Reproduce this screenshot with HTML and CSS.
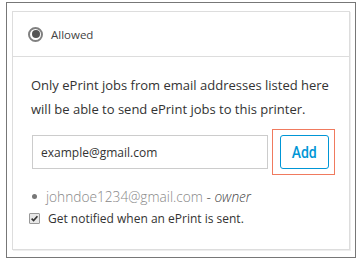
FILE: index.html
```html
<!DOCTYPE html>
<html>
<head>
<meta charset="utf-8">
<link rel="stylesheet" href="styles.css">
</head>
<body>
<div class="outer">
  <div class="panel">
    <div class="header">
      <span class="radio"><span class="dot"></span></span>
      <span class="label">Allowed</span>
    </div>
    <div class="body">
      <p class="desc">Only ePrint jobs from email addresses listed here will be able to send ePrint jobs to this printer.</p>
      <div class="add-row">
        <div class="input">example@gmail.com</div>
        <div class="focus"><button class="add"><span class="add-text">Add</span></button></div>
      </div>
      <div class="entry">
        <span class="bullet"></span>
        <span class="email">johndoe1234@gmail.com</span><span class="role"> - <i>owner</i></span>
      </div>
      <div class="notify">
        <span class="check">
          <svg width="9" height="9" viewBox="0 0 9 9"><path d="M1.6 4.6 L3.6 6.6 L7.4 2.2" fill="none" stroke="#333" stroke-width="1.6"/></svg>
        </span>
        <span class="notify-text">Get notified when an ePrint is sent.</span>
      </div>
    </div>
  </div>
</div>
</body>
</html>
```
FILE: styles.css
```css
html, body { margin: 0; padding: 0; background: #fff; }
body { font-family: "Open Sans", "Liberation Sans", sans-serif; color: #333; }
.outer {
  margin: 2px 0 0 6px;
  box-sizing: border-box;
  width: 350px;
  height: 256px;
  border: 1px solid #777;
  padding: 8px 5px 0 5px;
}
.panel {
  border: 1px solid #ddd;
  box-shadow: 1px 1px 0 #eee;
  height: 239px;
  box-sizing: border-box;
}
.header {
  height: 44px;
  border-bottom: 1px solid #ddd;
  display: flex;
  align-items: center;
  padding-left: 15px;
}
.radio {
  width: 11px; height: 11px;
  border: 2px solid #808080;
  border-radius: 50%;
  display: flex; align-items: center; justify-content: center;
  background: #fff;
}
.dot { width: 8px; height: 8px; border-radius: 50%; background: #555; }
.label { margin-left: 8px; font-size: 11.5px; color: #444; }
.body { padding: 16px 0 0 18px; }
.desc {
  margin: 0;
  font-size: 13px;
  line-height: 24px;
  color: #333;
  width: 300px;
}
.add-row { display: flex; align-items: center; margin-top: 8px; }
.input {
  margin-left: 1px;
  width: 236px; height: 34px;
  box-sizing: border-box;
  border: 1px solid #ccc;
  padding-left: 8px;
  display: flex; align-items: center;
  font-size: 12px; color: #333;
}
.focus {
  margin-left: 4px;
  border: 1px solid #f07a5e;
  padding: 5px 5px 5px 7px;
}
.add {
  width: 49px; height: 34px;
  border: 1px solid #0096d6;
  border-radius: 3px;
  background: #fff;
  color: #0096d6;
  font-family: Roboto, "Open Sans", sans-serif;
  font-size: 17px;
  font-weight: 500;
  padding: 0;
  display: flex; align-items: center; justify-content: center;
}
.add-text { display: inline-block; transform: scaleX(0.82); }
.entry { display: flex; align-items: center; margin-top: 9px; height: 24px; font-size: 13.7px; }
.bullet { width: 5px; height: 5px; border-radius: 50%; background: #777; margin-left: 1px; margin-right: 9px; }
.email { color: #888; font-weight: 300; }
.role { color: #444; white-space: pre; font-weight: 300; }
.notify { display: flex; align-items: center; height: 20px; font-size: 12px; }
.check {
  width: 9px; height: 9px;
  border: 1px solid #999;
  border-radius: 1px;
  background: #e8e8e8;
  display: flex; align-items: center; justify-content: center;
  margin-left: -2px;
  margin-right: 8px;
}
.check svg { display: block; }
.notify-text { color: #333; }
```
